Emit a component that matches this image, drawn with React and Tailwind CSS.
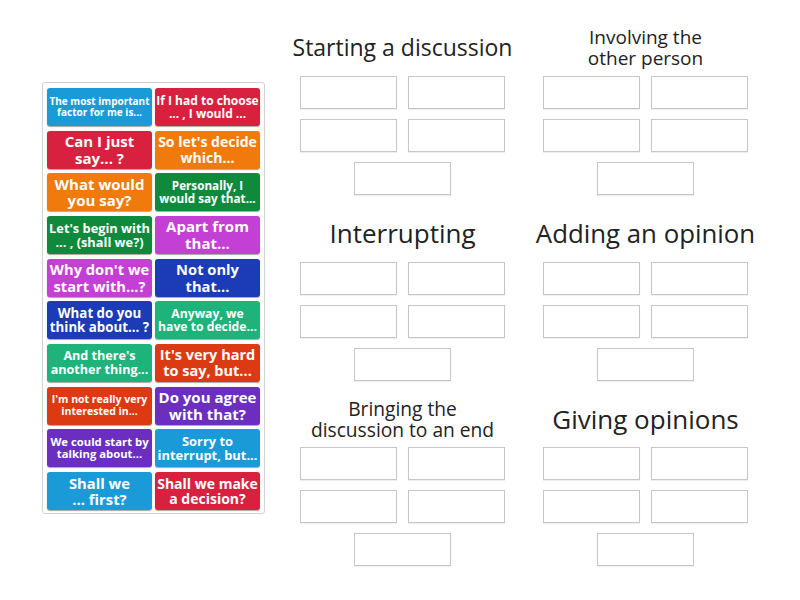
const tiles = [
  { lines: ["The most important", "factor for me is..."], bg: "bg-[#1b9ad8]", size: "text-[10px]" },
  { lines: ["If I had to choose", "... , I would ..."], bg: "bg-[#d7213e]", size: "text-[12px]" },
  { lines: ["Can I just", "say... ?"], bg: "bg-[#d7213e]", size: "text-[15px]" },
  { lines: ["So let's decide", "which..."], bg: "bg-[#f07a0c]", size: "text-[14px]" },
  { lines: ["What would", "you say?"], bg: "bg-[#f07a0c]", size: "text-[15px]" },
  { lines: ["Personally, I", "would say that..."], bg: "bg-[#0f8a3d]", size: "text-[11.7px]" },
  { lines: ["Let's begin with", "... , (shall we?)"], bg: "bg-[#0f8a3d]", size: "text-[12.8px]" },
  { lines: ["Apart from", "that..."], bg: "bg-[#c440d4]", size: "text-[15px]" },
  { lines: ["Why don't we", "start with...?"], bg: "bg-[#c440d4]", size: "text-[14.7px]" },
  { lines: ["Not only", "that..."], bg: "bg-[#1c3bb6]", size: "text-[14.7px]" },
  { lines: ["What do you", "think about... ?"], bg: "bg-[#1c3bb6]", size: "text-[13.3px]" },
  { lines: ["Anyway, we", "have to decide..."], bg: "bg-[#1db37b]", size: "text-[12.2px]" },
  { lines: ["And there's", "another thing..."], bg: "bg-[#1db37b]", size: "text-[12.6px]" },
  { lines: ["It's very hard", "to say, but..."], bg: "bg-[#db3a12]", size: "text-[14.5px]" },
  { lines: ["I'm not really very", "interested in..."], bg: "bg-[#db3a12]", size: "text-[10.5px]" },
  { lines: ["Do you agree", "with that?"], bg: "bg-[#6b2ec0]", size: "text-[15px]" },
  { lines: ["We could start by", "talking about..."], bg: "bg-[#6b2ec0]", size: "text-[11.3px]" },
  { lines: ["Sorry to", "interrupt, but..."], bg: "bg-[#1b9ad8]", size: "text-[12.9px]" },
  { lines: ["Shall we", "... first?"], bg: "bg-[#1b9ad8]", size: "text-[14.8px]" },
  { lines: ["Shall we make", "a decision?"], bg: "bg-[#d7213e]", size: "text-[14px]" },
];

const groups = [
  { title: ["Starting a discussion"], size: "text-[23px]" },
  { title: ["Involving the", "other person"], size: "text-[19px]" },
  { title: ["Interrupting"], size: "text-[26px]" },
  { title: ["Adding an opinion"], size: "text-[25.8px]" },
  { title: ["Bringing the", "discussion to an end"], size: "text-[19.2px]" },
  { title: ["Giving opinions"], size: "text-[26px]" },
];

const Tile = ({ tile }) => (
  <div
    className={`${tile.bg} ${tile.size} h-[38px] rounded-[3px] shadow-[0_1px_1px_rgba(0,0,0,0.35)] flex flex-col items-center justify-center text-white font-bold leading-[1.1] text-center whitespace-nowrap overflow-hidden`}
  >
    {tile.lines.map((l, i) => (
      <span key={i}>{l}</span>
    ))}
  </div>
);

const Slot = () => (
  <div className="w-[97px] h-[33px] bg-white border border-[#c6c6c6] shadow-[0_1px_1px_rgba(0,0,0,0.06)]"></div>
);

const Group = ({ group }) => (
  <div className="w-[243px] h-[185.5px] flex flex-col items-center">
    <div className={`h-[46px] flex flex-col items-center justify-center text-[#222] ${group.size} leading-[1.1] text-center whitespace-nowrap`}>
      {group.title.map((t, i) => (
        <span key={i}>{t}</span>
      ))}
    </div>
    <div className="mt-[5px] grid grid-cols-2 gap-x-[11px] gap-y-[10px]">
      <Slot />
      <Slot />
      <Slot />
      <Slot />
    </div>
    <div className="mt-[10px]">
      <Slot />
    </div>
  </div>
);

export default function App() {
  return (
    <div
      className="w-[800px] h-[600px] bg-white flex items-start pt-[25px] pl-[42px] overflow-hidden"
      style={{ fontFamily: '"Open Sans", "Noto Sans", sans-serif' }}
    >
      {/* tile bank */}
      <div className="mt-[57px] w-[223px] border border-[#d2d2d2] rounded-[3px] pt-[5px] pb-[3px] px-[4px] grid grid-cols-[105px_105px] gap-x-[3px] gap-y-[4.67px]">
        {tiles.map((t, i) => (
          <Tile key={i} tile={t} />
        ))}
      </div>

      {/* groups */}
      <div className="ml-[16px] grid grid-cols-[243px_243px]">
        {groups.map((g, i) => (
          <Group key={i} group={g} />
        ))}
      </div>
    </div>
  );
}
